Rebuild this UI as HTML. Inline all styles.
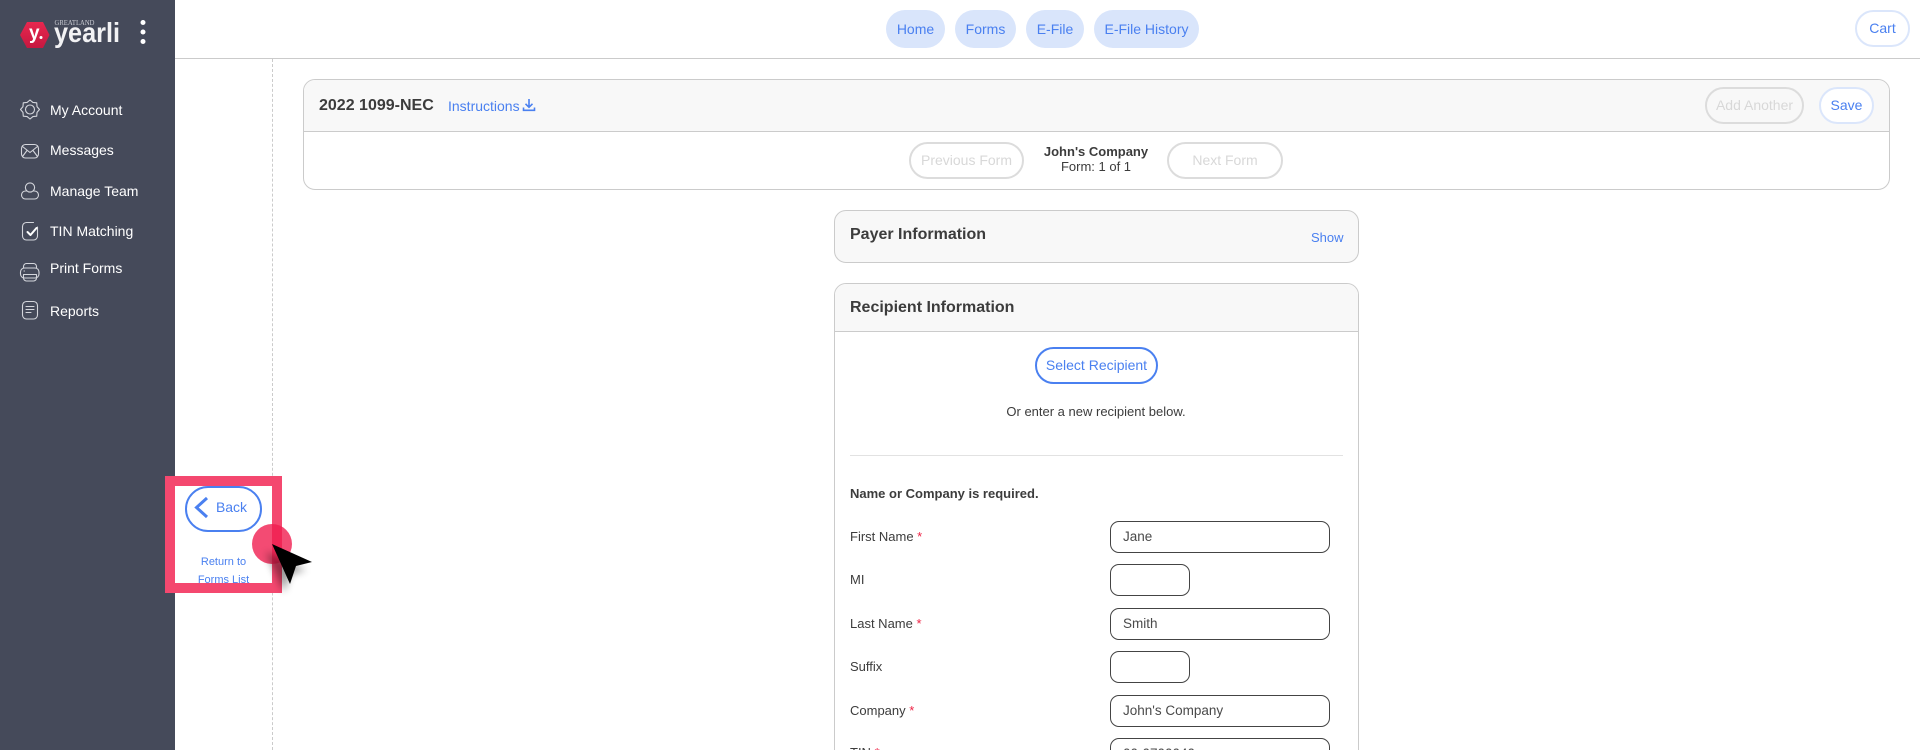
<!DOCTYPE html>
<html lang="en"><head><meta charset="utf-8"><title>2022 1099-NEC</title>
<style>
html,body{margin:0;padding:0;width:1920px;height:750px;overflow:hidden;background:#fff}
body{position:relative;font-family:"Liberation Sans",sans-serif;font-size:13px;color:#3c3c3c}
.a{position:absolute;box-sizing:border-box}
.t{position:absolute;white-space:nowrap;height:20px;line-height:20px}
.c{text-align:center}
.b{font-weight:700}
.blue{color:#4a80f0}
.pill{position:absolute;box-sizing:border-box;border-radius:20px;text-align:center;white-space:nowrap;font-size:14px;color:#4a80f0}
.nav{background:#d9e5fb;top:10px;height:38px;line-height:38px}
.lt{background:#fff;border:2px solid #dbe6fb;height:37px;line-height:33px}
.dis{border:2px solid #dcdcdc;color:#d8d8d8;height:37px;line-height:33px}
.card{position:absolute;box-sizing:border-box;border:1px solid #cbcbcb;border-radius:12px;overflow:hidden;background:#fff}
.head{position:absolute;left:0;right:0;top:0;background:#f8f8f8;border-bottom:1px solid #cbcbcb;box-sizing:border-box}
.in{position:absolute;box-sizing:border-box;left:1110px;width:220px;height:32px;border:1px solid #444;border-radius:9px;line-height:30px;padding-left:12px;font-size:13.500px;color:#4a4a4a;background:#fff;white-space:nowrap}
.sm{width:80px}
.nv{position:absolute;left:50px;height:20px;line-height:20px;font-size:14px;color:#fff;white-space:nowrap}
.r{color:#ee2244}
</style></head><body>

<div class="a" style="left:0;top:0;width:175px;height:750px;background:#454a5a"></div>
<svg class="a" style="left:0;top:0" width="175" height="60" viewBox="0 0 175 60">
<defs><linearGradient id="g" x1="0" y1="0" x2="0" y2="1"><stop offset="0" stop-color="#e8274f"/><stop offset="1" stop-color="#c51840"/></linearGradient></defs>
<polygon points="20,35 27,22 43,22 49.500,35 43,48 27,48" fill="url(#g)"/>
<text x="29" y="39" font-family="Liberation Sans" font-weight="700" font-size="19" fill="#fff">y</text>
<circle cx="41" cy="37.500" r="1.500" fill="#fff"/>
<text x="54.500" y="25" font-family="Liberation Serif" font-size="7.500" fill="#c9cbd2" textLength="40" lengthAdjust="spacingAndGlyphs">GREATLAND</text>
<text x="54" y="42" font-family="Liberation Sans" font-weight="700" font-size="28" fill="#f2f2f4" textLength="66" lengthAdjust="spacingAndGlyphs">yearli</text>
<circle cx="143" cy="22.500" r="2.500" fill="#fff"/><circle cx="143" cy="32" r="2.500" fill="#fff"/><circle cx="143" cy="41.500" r="2.500" fill="#fff"/>
</svg>

<svg class="a" style="left:0;top:90px" width="60" height="240" viewBox="0 90 60 240" fill="none" stroke="#d4d6dc" stroke-width="1.100" stroke-linecap="round" stroke-linejoin="round">
<g transform="translate(30,109.500)"><polygon points="9.500,0 7.020,2.910 6.720,6.720 2.910,7.020 0,9.500 -2.910,7.020 -6.720,6.720 -7.020,2.910 -9.500,0 -7.020,-2.910 -6.720,-6.720 -2.910,-7.020 0,-9.500 2.910,-7.020 6.720,-6.720 7.020,-2.910"/><circle r="4.500"/></g>
<rect x="21.500" y="144.500" width="17" height="13.500" rx="4"/><path d="M22.500 146.500L30 152.500L37.500 146.500M22.500 156.500L27 150.500M37.500 156.500L33 150.500"/>
<circle cx="30" cy="187.500" r="4.600"/><path d="M26.500 191h-1a4 4 0 0 0 0 8h9a4 4 0 0 0 0-8h-1"/>
<path d="M33.500 222.500h-7a4 4 0 0 0-4 4v9.500a4 4 0 0 0 4 4h7a4 4 0 0 0 4-4v-9"/><path d="M27.500 232l3 3 6-7" stroke="#fff" stroke-width="2"/>
<path d="M23.500 268v-1.500a3 3 0 0 1 3-3h7a3 3 0 0 1 3 3v1.500"/><rect x="20.500" y="268" width="18.500" height="10" rx="4"/><path d="M23.500 274.500h13M23.500 275v3a3 3 0 0 0 3 3h7a3 3 0 0 0 3-3v-3M24 271h.5"/>
<rect x="22.500" y="301.500" width="15" height="17.500" rx="4"/><path d="M26 306.500h8M26 309.500h8M26 312.500h5"/>
</svg>
<div class="nv" style="top:100px">My Account</div>
<div class="nv" style="top:140px">Messages</div>
<div class="nv" style="top:181px">Manage Team</div>
<div class="nv" style="top:221px">TIN Matching</div>
<div class="nv" style="top:258px">Print Forms</div>
<div class="nv" style="top:301px">Reports</div>

<div class="a" style="left:175px;top:58px;width:1745px;height:1px;background:#cbcbcb"></div>
<div class="a" style="left:272px;top:59px;width:0;height:691px;border-left:1px dashed #cbcbcb"></div>

<div class="pill nav" style="left:886px;width:59px">Home</div>
<div class="pill nav" style="left:955px;width:61px">Forms</div>
<div class="pill nav" style="left:1026px;width:58px">E-File</div>
<div class="pill nav" style="left:1094px;width:105px">E-File History</div>
<div class="pill lt" style="left:1855px;top:10px;width:55px">Cart</div>

<div class="card" style="left:303px;top:79px;width:1587px;height:111px">
  <div class="head" style="height:52px"></div>
</div>
<div class="t b" style="left:319px;top:96px;font-size:16px">2022 1099-NEC</div>
<div class="t blue" style="left:448px;top:95.500px;font-size:14px">Instructions</div>
<svg class="a" style="left:522px;top:98px" width="14" height="14" viewBox="0 0 14 14" fill="none" stroke="#4a80f0" stroke-width="1.600"><path d="M7 1v8M3.500 5.800L7 9.300l3.500-3.500M1.500 9.500v2.800h11V9.500"/></svg>
<div class="pill dis" style="left:1705px;top:87px;width:99px">Add Another</div>
<div class="pill lt" style="left:1819px;top:87px;width:55px">Save</div>
<div class="pill dis" style="left:909px;top:142px;width:115px">Previous Form</div>
<div class="pill dis" style="left:1167px;top:142px;width:116px">Next Form</div>
<div class="t b c" style="left:996px;width:200px;top:142px;font-size:13px">John's Company</div>
<div class="t c" style="left:996px;width:200px;top:157px;font-size:13px">Form: 1 of 1</div>

<div class="card" style="left:834px;top:210px;width:525px;height:53px;background:#f8f8f8"></div>
<div class="t b" style="left:850px;top:225px;font-size:16px">Payer Information</div>
<div class="t blue" style="left:1311px;top:227.500px;font-size:13px">Show</div>

<div class="card" style="left:834px;top:283px;width:525px;height:480px">
  <div class="head" style="height:48px"></div>
</div>
<div class="t b" style="left:850px;top:298px;font-size:16px">Recipient Information</div>
<div class="pill" style="left:1035px;top:347px;width:123px;height:37px;line-height:33px;border:2px solid #4a80f0;background:#fff">Select Recipient</div>
<div class="t c" style="left:996px;width:200px;top:402px">Or enter a new recipient below.</div>
<div class="a" style="left:850px;top:455px;width:493px;height:1px;background:#e2e2e2"></div>
<div class="t b" style="left:850px;top:484px">Name or Company is required.</div>

<div class="t" style="left:850px;top:527px">First Name <span class="r">*</span></div>
<div class="in" style="top:521px">Jane</div>
<div class="t" style="left:850px;top:570px">MI</div>
<div class="in sm" style="top:564px"></div>
<div class="t" style="left:850px;top:614px">Last Name <span class="r">*</span></div>
<div class="in" style="top:608px">Smith</div>
<div class="t" style="left:850px;top:657px">Suffix</div>
<div class="in sm" style="top:651px"></div>
<div class="t" style="left:850px;top:701px">Company <span class="r">*</span></div>
<div class="in" style="top:695px">John's Company</div>
<div class="t" style="left:850px;top:743px">TIN <span class="r">*</span></div>
<div class="in" style="top:738px">00-0700040</div>

<div class="pill" style="left:185px;top:486px;width:77px;height:46px;line-height:38px;border:2px solid #4a80f0;border-radius:23px;padding-left:16px;background:#fff;font-size:14px">Back</div>
<svg class="a" style="left:190px;top:494px" width="24" height="30" viewBox="0 0 24 30" fill="none" stroke="#4a80f0" stroke-width="3"><path d="M17 4l-10.500 9.500L17 23"/></svg>
<div class="t c blue" style="left:175px;width:97px;top:552px;font-size:11px">Return to</div>
<div class="t c blue" style="left:175px;width:97px;top:570px;font-size:11px">Forms List</div>
<div class="a" style="left:165px;top:476px;width:117px;height:117px;border:10px solid #f4486f"></div>
<div class="a" style="left:252px;top:524px;width:40px;height:40px;border-radius:50%;background:rgba(240,30,80,.8)"></div>
<svg class="a" style="left:260px;top:535px;overflow:visible" width="70" height="70" viewBox="0 0 70 70"><defs><filter id="s" x="-50%" y="-50%" width="200%" height="200%"><feGaussianBlur stdDeviation="4"/></filter></defs><polygon points="12,9 52,27 36,31 30,49" fill="#000" opacity=".4" transform="translate(-6,8)" filter="url(#s)"/><polygon points="12,9 52,27 36,31 30,49" fill="#000"/></svg>
</body></html>
